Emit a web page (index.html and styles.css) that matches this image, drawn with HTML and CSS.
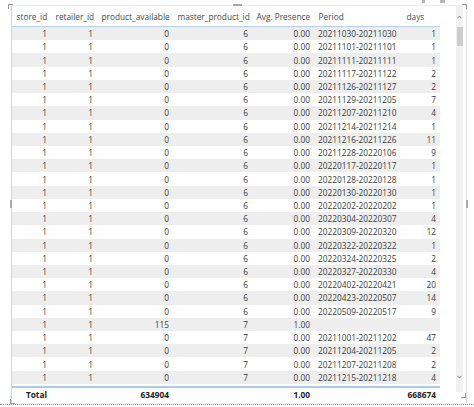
FILE: index.html
```html
<!DOCTYPE html>
<html>
<head>
<meta charset="utf-8">
<link rel="stylesheet" href="styles.css">
</head>
<body>
<div class="stage">
  <span class="mark mark-tl"></span>
  <span class="mark mark-tr"></span>
  <span class="mark mark-bl"></span>
  <span class="mark mark-br"></span>
  <span class="grip grip-top"></span>
  <span class="grip grip-left"></span>
  <span class="grip grip-right"></span>
  <span class="hdr-icon hdr-icon-a"></span>
  <span class="hdr-icon hdr-icon-b"></span>
  <div class="visual">
    <div class="table">
      <div class="row head">
        <div class="c">store_id</div><div class="c">retailer_id</div><div class="c">product_available</div><div class="c">master_product_id</div><div class="c">Avg. Presence</div><div class="c">Period</div><div class="c">days</div>
      </div>
      <div class="body" id="body"></div>
      <div class="row total">
        <div class="c num">Total</div><div class="c"></div><div class="c num">634904</div><div class="c"></div><div class="c num">1.00</div><div class="c"></div><div class="c num">668674</div>
      </div>
    </div>
    <div class="scroll">
      <div class="arrow"><svg width="5" height="4" viewBox="0 0 5 4"><polyline points="0.5,3.2 2.5,1 4.5,3.2" fill="none" stroke="#8a8a8a" stroke-width="0.9"/></svg></div>
      <div class="thumb"></div>
      <div class="rest"></div>
      <div class="arrow"><svg width="5" height="4" viewBox="0 0 5 4"><polyline points="0.5,0.8 2.5,3 4.5,0.8" fill="none" stroke="#8a8a8a" stroke-width="0.9"/></svg></div>
    </div>
  </div>
  <div class="dots"></div>
</div>
<script src="app.js"></script>
</body>
</html>
```
FILE: app.js
```js
const rows = [
  [1,1,0,6,"0.00","20211030-20211030",1],
  [1,1,0,6,"0.00","20211101-20211101",1],
  [1,1,0,6,"0.00","20211111-20211111",1],
  [1,1,0,6,"0.00","20211117-20211122",2],
  [1,1,0,6,"0.00","20211126-20211127",2],
  [1,1,0,6,"0.00","20211129-20211205",7],
  [1,1,0,6,"0.00","20211207-20211210",4],
  [1,1,0,6,"0.00","20211214-20211214",1],
  [1,1,0,6,"0.00","20211216-20211226",11],
  [1,1,0,6,"0.00","20211228-20220106",9],
  [1,1,0,6,"0.00","20220117-20220117",1],
  [1,1,0,6,"0.00","20220128-20220128",1],
  [1,1,0,6,"0.00","20220130-20220130",1],
  [1,1,0,6,"0.00","20220202-20220202",1],
  [1,1,0,6,"0.00","20220304-20220307",4],
  [1,1,0,6,"0.00","20220309-20220320",12],
  [1,1,0,6,"0.00","20220322-20220322",1],
  [1,1,0,6,"0.00","20220324-20220325",2],
  [1,1,0,6,"0.00","20220327-20220330",4],
  [1,1,0,6,"0.00","20220402-20220421",20],
  [1,1,0,6,"0.00","20220423-20220507",14],
  [1,1,0,6,"0.00","20220509-20220517",9],
  [1,1,115,7,"1.00","",""],
  [1,1,0,7,"0.00","20211001-20211202",47],
  [1,1,0,7,"0.00","20211204-20211205",2],
  [1,1,0,7,"0.00","20211207-20211208",2],
  [1,1,0,7,"0.00","20211215-20211218",4]
];
const body = document.getElementById("body");
rows.forEach((r, i) => {
  const row = document.createElement("div");
  row.className = "row" + (i % 2 === 0 ? " alt" : "");
  r.forEach((v, j) => {
    const c = document.createElement("div");
    c.className = "c" + (j === 5 ? "" : " num");
    c.textContent = v;
    row.appendChild(c);
  });
  body.appendChild(row);
});
```
FILE: styles.css
```css
html, body {
  margin: 0;
  padding: 0;
  background: #ffffff;
}
body {
  font-family: "Open Sans", "Noto Sans", sans-serif;
  font-size: 8.3px;
  color: #3c3c3c;
}
.stage {
  position: relative;
  width: 474px;
  height: 407px;
  overflow: hidden;
  display: flex;
  flex-direction: column;
}
.visual {
  margin: 5px 7px 0 11px;
  height: 398px;
  border-left: 1px solid #d4d4d4;
  border-top: 1px solid #ececec;
  border-right: 1px solid #e2e2e2;
  display: flex;
  box-sizing: border-box;
}
.table {
  display: flex;
  flex-direction: column;
  width: 428px;
  flex: none;
  opacity: 0.999;
}
.row {
  display: grid;
  grid-template-columns: 39px 46px 76px 79px 62px 88px 38px;
  height: 13.23px;
  align-items: center;
  white-space: nowrap;
}
.row.alt {
  background: #eeeeee;
}
.c {
  padding: 0 4px;
  overflow: hidden;
  line-height: 13px;
}
.num {
  text-align: right;
}
.head {
  height: 20px;
  border-bottom: 1px solid #b9d3ee;
  color: #4a4a4a;
}
.head .c {
  padding-left: 4.5px;
}
.body {
  display: flex;
  flex-direction: column;
}
.total {
  margin-top: 2px;
  border-top: 2px solid #a9cbec;
  height: 14px;
  font-weight: 700;
  color: #222222;
}
.scroll {
  margin-left: auto;
  margin-right: 3px;
  width: 7px;
  height: 386px;
  background: #f1f1f1;
  display: flex;
  flex-direction: column;
}
.arrow {
  height: 21px;
  display: flex;
  align-items: center;
  justify-content: center;
}
.scroll .arrow:last-child {
  height: 17px;
  align-items: flex-start;
}
.thumb {
  height: 19px;
  margin: 0 0.5px;
  background: #cdcdcd;
}
.rest {
  flex: 1;
}
.dots {
  margin-top: 1px;
  border-top: 1px dotted #8c8c8c;
}
.mark {
  position: absolute;
  width: 4px;
  height: 4px;
  border-color: #9a9a9a;
  border-style: solid;
  border-width: 0;
}
.mark-tl { left: 8px; top: 4px; border-left-width: 1px; border-top-width: 1px; }
.mark-tr { left: 462px; top: 4px; border-right-width: 1px; border-top-width: 1px; }
.mark-bl { left: 10px; top: 399px; border-left-width: 1px; border-bottom-width: 1px; }
.mark-br { left: 461px; top: 393px; border-right-width: 1px; border-bottom-width: 1px; }
.grip {
  position: absolute;
  background: #a8a8a8;
}
.grip-top { left: 233px; top: 4px; width: 9px; height: 2px; }
.grip-left { left: 10px; top: 200px; width: 2px; height: 8px; }
.grip-right { left: 466px; top: 200px; width: 2px; height: 8px; }
.hdr-icon {
  position: absolute;
  top: 0;
  height: 3px;
  background: #b5b5b5;
}
.hdr-icon-a { left: 422px; width: 3px; }
.hdr-icon-b { left: 440px; width: 5px; }
```
